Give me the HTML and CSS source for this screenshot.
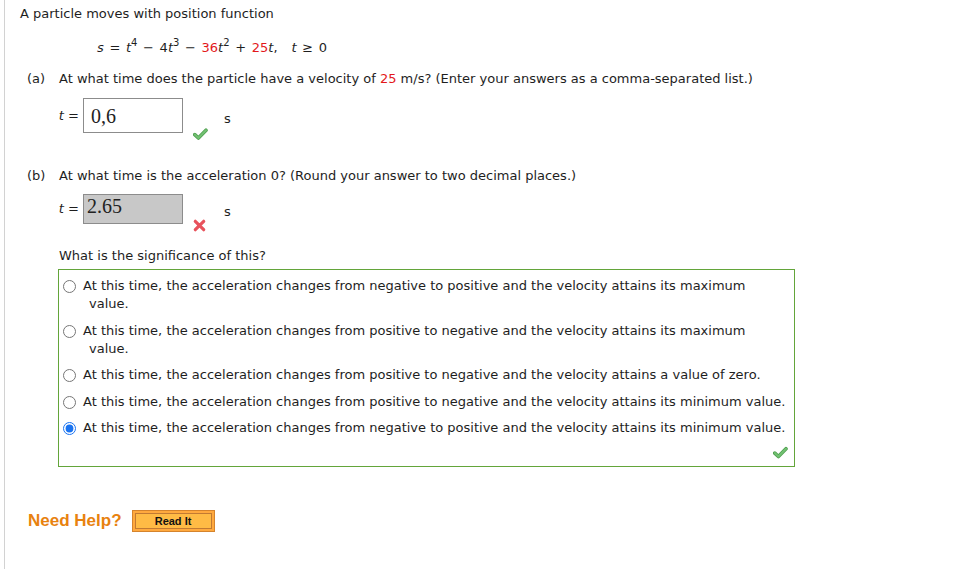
FILE: index.html
```html
<!DOCTYPE html>
<html>
<head>
<meta charset="utf-8">
<link rel="stylesheet" href="styles.css">
</head>
<body>
<div class="page">
  <p class="intro">A particle moves with position function</p>
  <p class="formula"><i>s</i> = <i>t</i><sup>4</sup> &minus; 4<i>t</i><sup>3</sup> &minus; <span class="red">36</span><i>t</i><sup>2</sup> + <span class="red">25</span><i>t</i>,<span class="sp"></span><i>t</i> &ge; 0</p>

  <div class="part part-a">
    <div class="question"><span class="plabel">(a)</span><span>At what time does the particle have a velocity of <span class="red">25</span> m/s? (Enter your answers as a comma-separated list.)</span></div>
    <div class="answer-row row-a">
      <span class="var"><i>t</i> =</span>
      <div class="box box-ok">0,6</div>
      <span class="mark mark-ok">
        <svg width="15" height="12" viewBox="0 0 15 12"><path d="M1.8 6.6 L5.4 10 L13 2.2" fill="none" stroke="#4f9f4f" stroke-width="3.6" stroke-linecap="round" stroke-linejoin="round"/><path d="M1.8 6.6 L5.4 10 L13 2.2" fill="none" stroke="#72c172" stroke-width="2" stroke-linecap="round" stroke-linejoin="round"/></svg>
      </span>
      <span class="unit">s</span>
    </div>
  </div>

  <div class="part part-b">
    <div class="question"><span class="plabel">(b)</span><span>At what time is the acceleration 0? (Round your answer to two decimal places.)</span></div>
    <div class="answer-row row-b">
      <span class="var"><i>t</i> =</span>
      <div class="box box-bad">2.65</div>
      <span class="mark mark-bad">
        <svg width="13" height="13" viewBox="0 0 13 13"><path d="M2.3 2.3 L10.7 10.7 M10.7 2.3 L2.3 10.7" fill="none" stroke="#e8525c" stroke-width="3.2" stroke-linecap="round"/></svg>
      </span>
      <span class="unit unit-b">s</span>
    </div>
    <p class="sig">What is the significance of this?</p>
    <div class="options">
      <label class="opt"><input type="radio" name="sig"><span class="otext">At this time, the acceleration changes from negative to positive and the velocity attains its maximum<span class="cont">value.</span></span></label>
      <label class="opt"><input type="radio" name="sig"><span class="otext">At this time, the acceleration changes from positive to negative and the velocity attains its maximum<span class="cont">value.</span></span></label>
      <label class="opt"><input type="radio" name="sig"><span class="otext">At this time, the acceleration changes from positive to negative and the velocity attains a value of zero.</span></label>
      <label class="opt"><input type="radio" name="sig"><span class="otext">At this time, the acceleration changes from positive to negative and the velocity attains its minimum value.</span></label>
      <label class="opt"><input type="radio" name="sig" checked><span class="otext">At this time, the acceleration changes from negative to positive and the velocity attains its minimum value.</span></label>
      <div class="opt-mark">
        <svg width="15" height="13" viewBox="0 0 15 12"><path d="M1.8 6.6 L5.4 10 L13 2.2" fill="none" stroke="#4f9f4f" stroke-width="3.6" stroke-linecap="round" stroke-linejoin="round"/><path d="M1.8 6.6 L5.4 10 L13 2.2" fill="none" stroke="#72c172" stroke-width="2" stroke-linecap="round" stroke-linejoin="round"/></svg>
      </div>
    </div>
  </div>

  <div class="help">
    <span class="need">Need Help?</span>
    <span class="btn"><span class="btn-in">Read It</span></span>
  </div>
</div>
</body>
</html>
```

FILE: styles.css
```css
html, body {
  margin: 0;
  padding: 0;
  background: #fff;
}
body {
  font-family: "DejaVu Sans", Verdana, sans-serif;
  font-size: 13px;
  line-height: 16px;
  color: #1e1e1e;
}
.page {
  margin-left: 4px;
  border-left: 1px solid #d2d2d2;
  padding: 6px 0 0 15px;
  min-height: 569px;
  box-sizing: border-box;
}
p { margin: 0; }
.red { color: #e3181b; }
.formula {
  margin-top: 18px;
  padding-left: 77px;
  word-spacing: 1.5px;
}
.formula sup {
  font-size: 10px;
  line-height: 0;
  vertical-align: 6px;
}
.formula .sp {
  display: inline-block;
  width: 14px;
}
.question {
  display: flex;
}
.plabel {
  width: 32px;
  padding-left: 7px;
}
.part-a { margin-top: 15px; }
.answer-row {
  display: flex;
  align-items: center;
  margin-left: 33px;
}
.row-a { margin-top: 11px; }
.row-b { margin-top: 10px; }
.var {
  flex: none;
  width: 26px;
  white-space: nowrap;
  text-align: right;
  margin-right: 4px;
}
.box {
  flex: none;
  width: 100px;
  box-sizing: border-box;
  border: 1px solid #8c8c8c;
  font-family: "Liberation Serif", "Times New Roman", serif;
  font-size: 20px;
  line-height: 22px;
  color: #222;
}
.box-ok {
  height: 35px;
  padding: 6px 0 0 7px;
  background: #fff;
}
.box-bad {
  height: 30px;
  padding: 0 0 0 3px;
  background: #c8c8c8;
}
.mark {
  display: flex;
  align-self: flex-end;
  margin-left: 10px;
}
.mark-ok { margin-bottom: -7px; }
.mark-bad { margin-bottom: -8px; }
.unit {
  margin-left: 16px;
  margin-top: 6px;
}
.unit-b { margin-left: 18px; }
.part-b { margin-top: 35px; }
.sig {
  margin: 24px 0 0 39px;
}
.options {
  margin: 5px 0 0 38px;
  width: 737px;
  box-sizing: border-box;
  border: 1px solid #63a53a;
  padding: 7px 6px 7px 4px;
  display: flex;
  flex-direction: column;
  gap: 8.5px;
}
.opt {
  display: flex;
  align-items: flex-start;
  line-height: 18px;
  white-space: nowrap;
}
.opt input {
  margin: 3px 7px 0 0;
  width: 13px;
  height: 13px;
  flex: none;
  accent-color: #1a73f0;
}
.cont {
  display: block;
  padding-left: 6px;
}
.opt-mark {
  display: flex;
  justify-content: flex-end;
  margin-top: 0;
}
.help {
  display: flex;
  align-items: center;
  margin: 43px 0 0 8px;
}
.need {
  font-family: "Liberation Sans", Arial, sans-serif;
  font-weight: bold;
  font-size: 17px;
  color: #e8820f;
}
.btn {
  margin-left: 10px;
  width: 83px;
  height: 22px;
  box-sizing: border-box;
  border: 1px solid #d5842d;
  background: #ffa93e;
  padding: 2px;
  display: flex;
}
.btn-in {
  flex: 1;
  border: 1px solid #c27a32;
  background: #ffbb45;
  font-family: "Liberation Sans", Arial, sans-serif;
  font-weight: bold;
  font-size: 11px;
  line-height: 14px;
  color: #111;
  text-align: center;
}
```
